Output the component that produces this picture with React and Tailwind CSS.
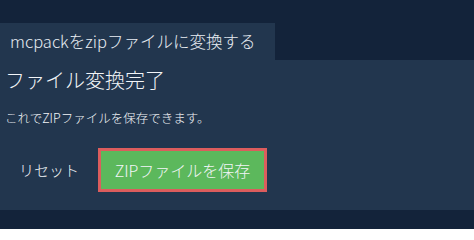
import React from 'react';

export default function App() {
  return (
    <div
      className="w-[474px] h-[229px] bg-[#13233a] text-white overflow-hidden font-light"
      style={{ fontFamily: '"Noto Sans CJK JP", "Noto Sans", sans-serif' }}
    >
      <div className="h-[23px]" />
      <div className="flex">
        <div className="w-[275px] h-[37px] bg-[#22364e] flex items-center pl-[10px] text-[16.5px] text-[#e8edf3]">
          mcpackをzipファイルに変換する
        </div>
      </div>
      <div className="h-[150px] bg-[#22364e] px-[5px] pt-[6px]">
        <h2 className="text-[20px] leading-[28px] text-[#f2f5f8]">ファイル変換完了</h2>
        <p className="mt-[16px] text-[12.5px] leading-[16px] text-[#f2f5f8]">
          これでZIPファイルを保存できます。
        </p>
        <div className="mt-[22px] flex items-center">
          <button className="ml-[14px] text-[15px] text-[#f2f5f8]">リセット</button>
          <button className="ml-[19px] w-[169px] h-[44px] border-[3px] border-[#dc5d5d] bg-[#5cb85c] text-[16px] text-[#f2f5f8]">
            ZIPファイルを保存
          </button>
        </div>
      </div>
    </div>
  );
}
